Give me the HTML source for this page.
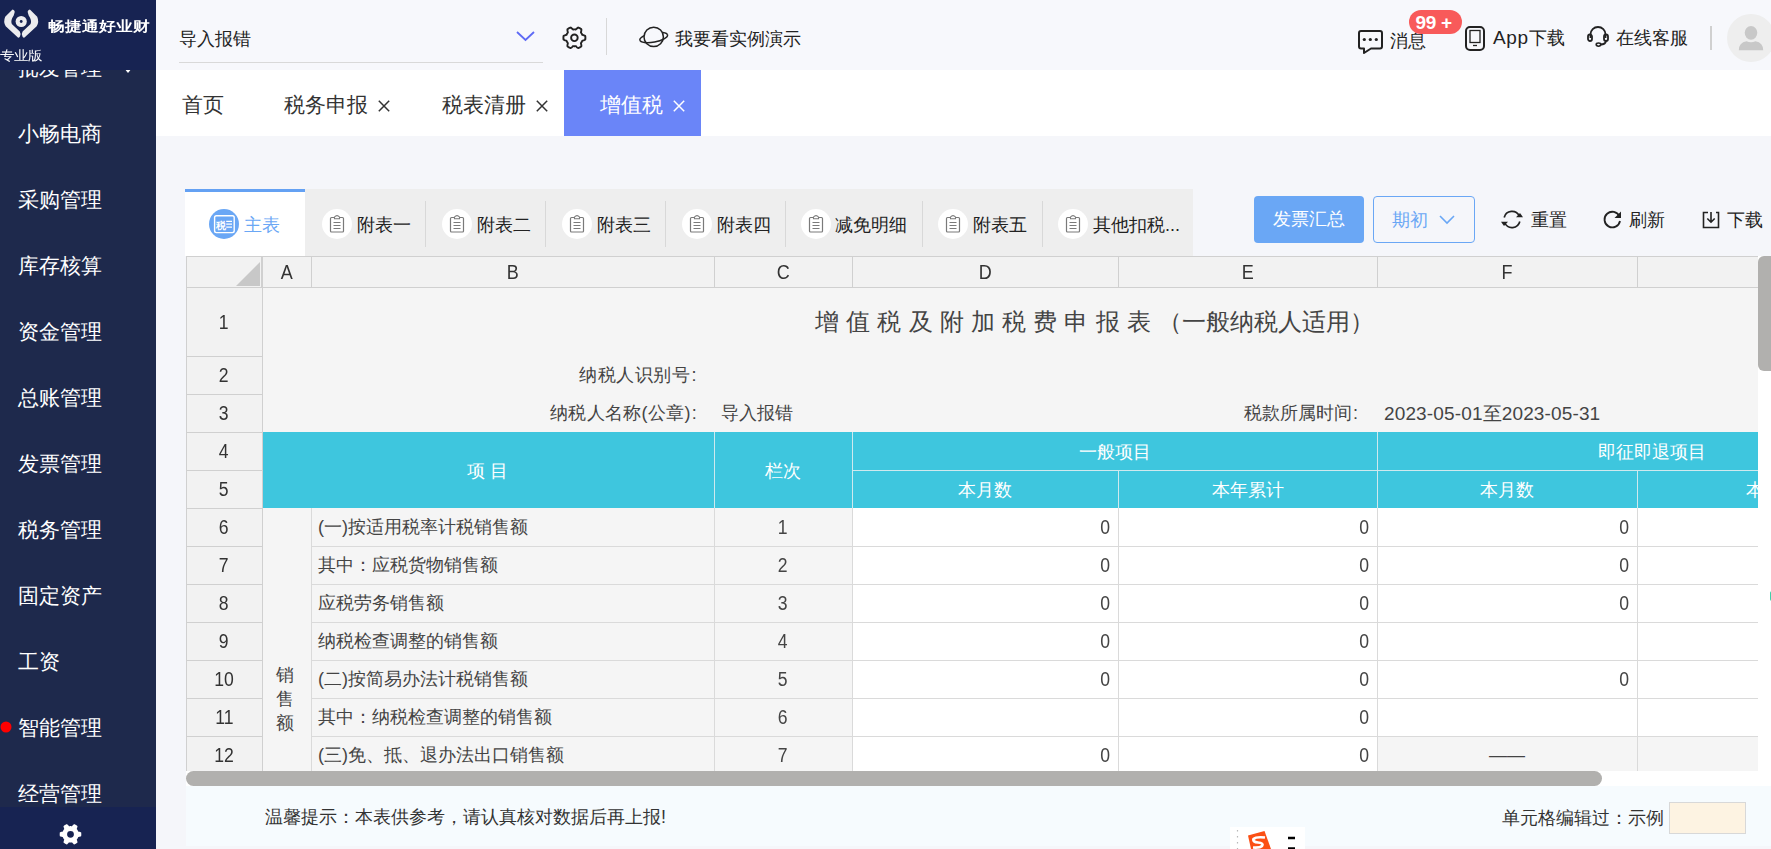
<!DOCTYPE html>
<html><head><meta charset="utf-8"><style>
*{box-sizing:border-box;margin:0;padding:0}
html,body{width:1771px;height:849px;overflow:hidden;background:#f5f6fa;font-family:"Liberation Sans",sans-serif}
body{position:relative}
.a{position:absolute;white-space:nowrap}
svg{position:absolute;overflow:visible}
</style></head><body>
<div class="a" style="left:0px;top:0px;width:156px;height:849px;background:#1e294c"></div>
<div class="a" style="left:18px;top:57px;font-size:21px;line-height:21px;color:#fff;">批发管理</div>
<svg style="left:124px;top:68px" width="8" height="6"><path d="M0 0L8 0L4 5Z" fill="#fff"/></svg>
<div class="a" style="left:0px;top:0px;width:156px;height:70px;background:#172352"></div>
<svg style="left:0;top:5px" width="45" height="45" viewBox="0 5 45 45">
<path d="M12.5 9.5Q15.2 10.5 14.6 12.5L13.7 15.4Q10.2 20.6 11.8 23.9L19.8 31.4Q21 34 20.3 35.2Q19.8 38.3 17.9 37.5L5.7 26.2Q3 22 5.2 16.8L12.5 9.5Z" fill="#ececee"/>
<path d="M29.9 9.5 Q27.2 10.5 27.8 12.5 L28.7 15.4 Q32.2 20.6 30.6 23.9 L22.6 31.4 Q21.4 34.0 22.1 35.2 Q22.6 38.3 24.5 37.5 L36.7 26.2 Q39.4 22.0 37.2 16.8 L29.9 9.5 Z" fill="#ececee"/>
<circle cx="21.2" cy="21.5" r="5.6" fill="#ececee"/><circle cx="21.2" cy="21.5" r="1.4" fill="#172352"/>
</svg>
<div class="a" style="left:48px;top:19px;font-size:15px;line-height:15px;color:#fff;font-weight:bold;transform:scale(1.13,0.95);transform-origin:0 0">畅捷通好业财</div>
<div class="a" style="left:0px;top:49px;font-size:14px;line-height:14px;color:#fff;transform:scaleY(0.9);transform-origin:0 0">专业版</div>
<div class="a" style="left:18px;top:123px;font-size:21px;line-height:21px;color:#fff;">小畅电商</div>
<div class="a" style="left:18px;top:189px;font-size:21px;line-height:21px;color:#fff;">采购管理</div>
<div class="a" style="left:18px;top:255px;font-size:21px;line-height:21px;color:#fff;">库存核算</div>
<div class="a" style="left:18px;top:321px;font-size:21px;line-height:21px;color:#fff;">资金管理</div>
<div class="a" style="left:18px;top:387px;font-size:21px;line-height:21px;color:#fff;">总账管理</div>
<div class="a" style="left:18px;top:453px;font-size:21px;line-height:21px;color:#fff;">发票管理</div>
<div class="a" style="left:18px;top:519px;font-size:21px;line-height:21px;color:#fff;">税务管理</div>
<div class="a" style="left:18px;top:585px;font-size:21px;line-height:21px;color:#fff;">固定资产</div>
<div class="a" style="left:18px;top:651px;font-size:21px;line-height:21px;color:#fff;">工资</div>
<div class="a" style="left:18px;top:717px;font-size:21px;line-height:21px;color:#fff;">智能管理</div>
<div class="a" style="left:18px;top:783px;font-size:21px;line-height:21px;color:#fff;">经营管理</div>
<svg style="left:0;top:721px" width="12" height="12"><circle cx="6" cy="6" r="5.5" fill="#f00"/></svg>
<div class="a" style="left:0px;top:807px;width:156px;height:42px;background:#172352"></div>
<svg style="left:50px;top:814px" width="40" height="40" viewBox="0 0 40 40">
<path fill="#fff" fill-rule="evenodd" d="M31.30 20.30L31.30 20.58L31.29 20.87L31.27 21.15L31.24 21.43L31.21 21.71L31.17 21.99L31.12 22.27L30.66 22.46L30.17 22.62L29.68 22.76L29.18 22.87L28.69 22.96L28.23 23.04L28.16 23.24L28.08 23.44L27.99 23.64L27.90 23.83L27.81 24.02L27.71 24.21L27.60 24.40L27.49 24.58L27.38 24.77L27.26 24.94L27.13 25.12L27.01 25.29L26.87 25.46L26.74 25.63L26.90 26.07L27.07 26.53L27.22 27.02L27.35 27.52L27.45 28.02L27.51 28.51L27.30 28.69L27.07 28.87L26.85 29.04L26.62 29.20L26.38 29.36L26.14 29.51L25.90 29.65L25.65 29.79L25.40 29.92L25.15 30.05L24.89 30.17L24.63 30.28L24.37 30.38L24.10 30.48L23.71 30.18L23.33 29.84L22.96 29.48L22.61 29.10L22.29 28.73L21.99 28.36L21.78 28.40L21.57 28.43L21.36 28.46L21.14 28.47L20.93 28.49L20.71 28.50L20.50 28.50L20.29 28.50L20.07 28.49L19.86 28.47L19.64 28.46L19.43 28.43L19.22 28.40L19.01 28.36L18.71 28.73L18.39 29.10L18.04 29.48L17.67 29.84L17.29 30.18L16.90 30.48L16.63 30.38L16.37 30.28L16.11 30.17L15.85 30.05L15.60 29.92L15.35 29.79L15.10 29.65L14.86 29.51L14.62 29.36L14.38 29.20L14.15 29.04L13.93 28.87L13.70 28.69L13.49 28.51L13.55 28.02L13.65 27.52L13.78 27.02L13.93 26.53L14.10 26.07L14.26 25.63L14.13 25.46L13.99 25.29L13.87 25.12L13.74 24.94L13.62 24.77L13.51 24.58L13.40 24.40L13.29 24.21L13.19 24.02L13.10 23.83L13.01 23.64L12.92 23.44L12.84 23.24L12.77 23.04L12.31 22.96L11.82 22.87L11.32 22.76L10.83 22.62L10.34 22.46L9.88 22.27L9.83 21.99L9.79 21.71L9.76 21.43L9.73 21.15L9.71 20.87L9.70 20.58L9.70 20.30L9.70 20.02L9.71 19.73L9.73 19.45L9.76 19.17L9.79 18.89L9.83 18.61L9.88 18.33L10.34 18.14L10.83 17.98L11.32 17.84L11.82 17.73L12.31 17.64L12.77 17.56L12.84 17.36L12.92 17.16L13.01 16.96L13.10 16.77L13.19 16.58L13.29 16.39L13.40 16.20L13.51 16.02L13.62 15.83L13.74 15.66L13.87 15.48L13.99 15.31L14.13 15.14L14.26 14.97L14.10 14.53L13.93 14.07L13.78 13.58L13.65 13.08L13.55 12.58L13.49 12.09L13.70 11.91L13.93 11.73L14.15 11.56L14.38 11.40L14.62 11.24L14.86 11.09L15.10 10.95L15.35 10.81L15.60 10.68L15.85 10.55L16.11 10.43L16.37 10.32L16.63 10.22L16.90 10.12L17.29 10.42L17.67 10.76L18.04 11.12L18.39 11.50L18.71 11.87L19.01 12.24L19.22 12.20L19.43 12.17L19.64 12.14L19.86 12.13L20.07 12.11L20.29 12.10L20.50 12.10L20.71 12.10L20.93 12.11L21.14 12.13L21.36 12.14L21.57 12.17L21.78 12.20L21.99 12.24L22.29 11.87L22.61 11.50L22.96 11.12L23.33 10.76L23.71 10.42L24.10 10.12L24.37 10.22L24.63 10.32L24.89 10.43L25.15 10.55L25.40 10.68L25.65 10.81L25.90 10.95L26.14 11.09L26.38 11.24L26.62 11.40L26.85 11.56L27.07 11.73L27.30 11.91L27.51 12.09L27.45 12.58L27.35 13.08L27.22 13.58L27.07 14.07L26.90 14.53L26.74 14.97L26.87 15.14L27.01 15.31L27.13 15.48L27.26 15.66L27.38 15.83L27.49 16.02L27.60 16.20L27.71 16.39L27.81 16.58L27.90 16.77L27.99 16.96L28.08 17.16L28.16 17.36L28.23 17.56L28.69 17.64L29.18 17.73L29.68 17.84L30.17 17.98L30.66 18.14L31.12 18.33L31.17 18.61L31.21 18.89L31.24 19.17L31.27 19.45L31.29 19.73L31.30 20.02Z M20.5 16.9A3.4 3.4 0 1 0 20.5 23.7A3.4 3.4 0 1 0 20.5 16.9Z"/>
</svg>
<div class="a" style="left:156px;top:0px;width:1615px;height:70px;background:#f7f8fc"></div>
<div class="a" style="left:179px;top:30px;font-size:18px;line-height:18px;color:#222;">导入报错</div>
<div class="a" style="left:179px;top:62px;width:364px;height:1px;background:#d9d9d9"></div>
<svg style="left:516px;top:31px" width="19" height="10"><path d="M1 1L9.5 9L18 1" stroke="#5e6af5" stroke-width="1.8" fill="none"/></svg>
<svg style="left:554px;top:18px" width="40" height="40" viewBox="0 0 40 40">
<path fill="none" stroke="#222" stroke-width="1.9" stroke-linejoin="round" d="M31.40 19.80L31.40 20.09L31.38 20.38L31.37 20.66L31.34 20.95L31.31 21.24L31.26 21.52L30.98 21.76L30.60 21.97L30.19 22.15L29.77 22.31L29.35 22.45L28.94 22.57L28.54 22.68L28.24 22.81L28.16 23.01L28.07 23.22L27.98 23.42L27.88 23.61L27.78 23.81L27.67 24.00L27.56 24.19L27.44 24.37L27.32 24.56L27.20 24.74L27.06 24.91L26.93 25.09L26.97 25.41L27.07 25.81L27.17 26.23L27.26 26.66L27.33 27.10L27.37 27.55L27.39 27.98L27.32 28.35L27.10 28.53L26.87 28.70L26.63 28.87L26.39 29.03L26.15 29.18L25.90 29.33L25.65 29.47L25.39 29.60L25.14 29.73L24.87 29.85L24.61 29.96L24.34 30.07L23.99 29.95L23.62 29.71L23.26 29.45L22.91 29.17L22.58 28.88L22.27 28.58L21.97 28.29L21.71 28.10L21.50 28.13L21.28 28.15L21.06 28.17L20.84 28.19L20.62 28.20L20.40 28.20L20.18 28.20L19.96 28.19L19.74 28.17L19.52 28.15L19.30 28.13L19.09 28.10L18.83 28.29L18.53 28.58L18.22 28.88L17.89 29.17L17.54 29.45L17.18 29.71L16.81 29.95L16.46 30.07L16.19 29.96L15.93 29.85L15.66 29.73L15.41 29.60L15.15 29.47L14.90 29.33L14.65 29.18L14.41 29.03L14.17 28.87L13.93 28.70L13.70 28.53L13.48 28.35L13.41 27.98L13.43 27.55L13.47 27.10L13.54 26.66L13.63 26.23L13.73 25.81L13.83 25.41L13.87 25.09L13.74 24.91L13.60 24.74L13.48 24.56L13.36 24.37L13.24 24.19L13.13 24.00L13.02 23.81L12.92 23.61L12.82 23.42L12.73 23.22L12.64 23.01L12.56 22.81L12.26 22.68L11.86 22.57L11.45 22.45L11.03 22.31L10.61 22.15L10.20 21.97L9.82 21.76L9.54 21.52L9.49 21.24L9.46 20.95L9.43 20.66L9.42 20.38L9.40 20.09L9.40 19.80L9.40 19.51L9.42 19.22L9.43 18.94L9.46 18.65L9.49 18.36L9.54 18.08L9.82 17.84L10.20 17.63L10.61 17.45L11.03 17.29L11.45 17.15L11.86 17.03L12.26 16.92L12.56 16.79L12.64 16.59L12.73 16.38L12.82 16.18L12.92 15.99L13.02 15.79L13.13 15.60L13.24 15.41L13.36 15.23L13.48 15.04L13.60 14.86L13.74 14.69L13.87 14.51L13.83 14.19L13.73 13.79L13.63 13.37L13.54 12.94L13.47 12.50L13.43 12.05L13.41 11.62L13.48 11.25L13.70 11.07L13.93 10.90L14.17 10.73L14.41 10.57L14.65 10.42L14.90 10.27L15.15 10.13L15.41 10.00L15.66 9.87L15.93 9.75L16.19 9.64L16.46 9.53L16.81 9.65L17.18 9.89L17.54 10.15L17.89 10.43L18.22 10.72L18.53 11.02L18.83 11.31L19.09 11.50L19.30 11.47L19.52 11.45L19.74 11.43L19.96 11.41L20.18 11.40L20.40 11.40L20.62 11.40L20.84 11.41L21.06 11.43L21.28 11.45L21.50 11.47L21.71 11.50L21.97 11.31L22.27 11.02L22.58 10.72L22.91 10.43L23.26 10.15L23.62 9.89L23.99 9.65L24.34 9.53L24.61 9.64L24.87 9.75L25.14 9.87L25.39 10.00L25.65 10.13L25.90 10.27L26.15 10.42L26.39 10.57L26.63 10.73L26.87 10.90L27.10 11.07L27.32 11.25L27.39 11.62L27.37 12.05L27.33 12.50L27.26 12.94L27.17 13.37L27.07 13.79L26.97 14.19L26.93 14.51L27.06 14.69L27.20 14.86L27.32 15.04L27.44 15.23L27.56 15.41L27.67 15.60L27.78 15.79L27.88 15.99L27.98 16.18L28.07 16.38L28.16 16.59L28.24 16.79L28.54 16.92L28.94 17.03L29.35 17.15L29.77 17.29L30.19 17.45L30.60 17.63L30.98 17.84L31.26 18.08L31.31 18.36L31.34 18.65L31.37 18.94L31.38 19.22L31.40 19.51Z"/>
<circle cx="20.4" cy="19.8" r="3.3" fill="none" stroke="#222" stroke-width="1.9"/></svg>
<div class="a" style="left:606px;top:18px;width:1px;height:37px;background:#d8d8d8"></div>
<svg style="left:630px;top:17px" width="40" height="40" viewBox="0 0 40 40">
<defs><mask id="pm"><rect x="0" y="0" width="40" height="40" fill="#fff"/><circle cx="23.7" cy="19.9" r="9.7" fill="#000"/></mask></defs>
<circle cx="23.7" cy="19.9" r="9.7" fill="none" stroke="#222" stroke-width="1.5"/>
<g transform="rotate(-11 23.7 20.5)">
<path d="M9.6 20.5A14.1 4.6 0 0 1 37.8 20.5" fill="none" stroke="#222" stroke-width="1.5" mask="url(#pm)"/>
<path d="M9.6 20.5A14.1 4.6 0 0 0 37.8 20.5" fill="none" stroke="#222" stroke-width="1.5"/>
</g></svg>
<div class="a" style="left:675px;top:30px;font-size:18px;line-height:18px;color:#222;">我要看实例演示</div>
<svg style="left:1357px;top:29px" width="26" height="26" viewBox="0 0 26 26">
<path d="M4 2H23Q25 2 25 4V17.5Q25 19.5 23 19.5H14L7 24V19.5H4Q2 19.5 2 17.5V4Q2 2 4 2Z" fill="none" stroke="#222" stroke-width="2" stroke-linejoin="round"/>
<circle cx="7.3" cy="10.5" r="1.6" fill="#222"/><circle cx="13.3" cy="10.5" r="1.6" fill="#222"/><circle cx="19.3" cy="10.5" r="1.6" fill="#222"/></svg>
<div class="a" style="left:1390px;top:32px;font-size:18px;line-height:18px;color:#222;">消息</div>
<div class="a" style="left:1409px;top:10px;width:53px;height:24px;border-radius:12px;background:#f85a5a;color:#fff;font-weight:bold;font-size:19px;line-height:25px;text-align:left;padding-left:6.5px;letter-spacing:-0.3px">99 +</div>
<svg style="left:1465px;top:26px" width="20" height="25" viewBox="0 0 20 25">
<rect x="1" y="1" width="18" height="23" rx="4" fill="none" stroke="#222" stroke-width="2"/>
<rect x="5" y="4.5" width="10" height="12" fill="none" stroke="#222" stroke-width="1.3"/>
<path d="M8 19.5H12" stroke="#222" stroke-width="1.3"/></svg>
<div class="a" style="left:1493px;top:29px;font-size:18px;line-height:18px;color:#222;"><span style="letter-spacing:0.6px;font-size:19px">App</span>下载</div>
<svg style="left:1587px;top:25px" width="22" height="23" viewBox="0 0 22 23">
<path d="M3.5 13V9.5A7.5 7.5 0 0 1 18.5 9.5V13" fill="none" stroke="#222" stroke-width="1.8"/>
<rect x="1" y="9.5" width="4" height="6.5" rx="2" fill="none" stroke="#222" stroke-width="1.8"/>
<rect x="17" y="9.5" width="4" height="6.5" rx="2" fill="none" stroke="#222" stroke-width="1.8"/>
<path d="M19 16Q18.5 19.5 13.5 19.5" fill="none" stroke="#222" stroke-width="1.8"/>
<ellipse cx="11.5" cy="19.6" rx="2.3" ry="1.6" fill="none" stroke="#222" stroke-width="1.6"/></svg>
<div class="a" style="left:1616px;top:29px;font-size:18px;line-height:18px;color:#222;">在线客服</div>
<div class="a" style="left:1710px;top:26px;width:2px;height:24px;background:#d0d0d0"></div>
<svg style="left:1727px;top:14px" width="48" height="48" viewBox="0 0 48 48">
<circle cx="24" cy="24" r="24" fill="#eeeeee"/>
<ellipse cx="24" cy="18.8" rx="6.3" ry="6.9" fill="#c8c8c8"/>
<path d="M11.8 36.3Q11.8 28.5 19.5 27.2Q24 29.5 28.5 27.2Q36.2 28.5 36.2 36.3Z" fill="#c8c8c8"/></svg>
<div class="a" style="left:156px;top:70px;width:1615px;height:66px;background:#fff"></div>
<div class="a" style="left:182px;top:94px;font-size:21px;line-height:21px;color:#333;">首页</div>
<div class="a" style="left:284px;top:94px;font-size:21px;line-height:21px;color:#333;">税务申报</div>
<svg style="left:378px;top:100px" width="12" height="12"><path d="M0.8 0.8L11.2 11.2M11.2 0.8L0.8 11.2" stroke="#333" stroke-width="1.5"/></svg>
<div class="a" style="left:442px;top:94px;font-size:21px;line-height:21px;color:#333;">税表清册</div>
<svg style="left:536px;top:100px" width="12" height="12"><path d="M0.8 0.8L11.2 11.2M11.2 0.8L0.8 11.2" stroke="#333" stroke-width="1.5"/></svg>
<div class="a" style="left:564px;top:70px;width:137px;height:66px;background:#6a85f8"></div>
<div class="a" style="left:600px;top:94px;font-size:21px;line-height:21px;color:#fff;">增值税</div>
<svg style="left:673px;top:100px" width="12" height="12"><path d="M0.8 0.8L11.2 11.2M11.2 0.8L0.8 11.2" stroke="#fff" stroke-width="1.5"/></svg>
<div class="a" style="left:185px;top:189px;width:1008px;height:67px;background:#eeeeee"></div>
<div class="a" style="left:185px;top:189px;width:120px;height:67px;background:#fff"></div>
<div class="a" style="left:185px;top:189px;width:120px;height:3px;background:#64a1f3"></div>
<svg style="left:209px;top:209px" width="30" height="30" viewBox="0 0 30 30">
<circle cx="15" cy="15" r="15" fill="#6aa7f5"/>
<rect x="5.6" y="6.8" width="19.6" height="16.8" rx="1.8" fill="none" stroke="#fff" stroke-width="1.4"/>
<text x="6.6" y="19.6" font-size="10" font-weight="bold" fill="#fff" font-family="Liberation Sans">税</text>
<path d="M17.2 12.3H23M17.2 15.2H23M17.2 18.1H23" stroke="#fff" stroke-width="1.3"/></svg>
<div class="a" style="left:244px;top:216px;font-size:18px;line-height:18px;color:#6aa7f5;">主表</div>
<div class="a" style="left:425px;top:201px;width:1px;height:46px;background:#d8d8d8"></div>
<div class="a" style="left:545px;top:201px;width:1px;height:46px;background:#d8d8d8"></div>
<div class="a" style="left:665px;top:201px;width:1px;height:46px;background:#d8d8d8"></div>
<div class="a" style="left:785px;top:201px;width:1px;height:46px;background:#d8d8d8"></div>
<div class="a" style="left:922px;top:201px;width:1px;height:46px;background:#d8d8d8"></div>
<div class="a" style="left:1042px;top:201px;width:1px;height:46px;background:#d8d8d8"></div>
<svg style="left:322px;top:209px" width="30" height="30" viewBox="0 0 30 30">
<circle cx="15" cy="15" r="15" fill="#fff"/>
<path d="M12.5 8.5H9.5Q8.5 8.5 8.5 9.5V22Q8.5 23 9.5 23H20.5Q21.5 23 21.5 22V9.5Q21.5 8.5 20.5 8.5H17.5" fill="none" stroke="#7a7a7a" stroke-width="1.2"/>
<path d="M12.5 9.8V8Q15 5.2 17.5 8V9.8Z" fill="none" stroke="#7a7a7a" stroke-width="1.1"/>
<path d="M11.5 13.5H18.5M11.5 16.5H18.5M11.5 19.5H18.5" stroke="#7a7a7a" stroke-width="1.2"/></svg>
<div class="a" style="left:357px;top:216px;font-size:18px;line-height:18px;color:#222;">附表一</div>
<svg style="left:442px;top:209px" width="30" height="30" viewBox="0 0 30 30">
<circle cx="15" cy="15" r="15" fill="#fff"/>
<path d="M12.5 8.5H9.5Q8.5 8.5 8.5 9.5V22Q8.5 23 9.5 23H20.5Q21.5 23 21.5 22V9.5Q21.5 8.5 20.5 8.5H17.5" fill="none" stroke="#7a7a7a" stroke-width="1.2"/>
<path d="M12.5 9.8V8Q15 5.2 17.5 8V9.8Z" fill="none" stroke="#7a7a7a" stroke-width="1.1"/>
<path d="M11.5 13.5H18.5M11.5 16.5H18.5M11.5 19.5H18.5" stroke="#7a7a7a" stroke-width="1.2"/></svg>
<div class="a" style="left:477px;top:216px;font-size:18px;line-height:18px;color:#222;">附表二</div>
<svg style="left:562px;top:209px" width="30" height="30" viewBox="0 0 30 30">
<circle cx="15" cy="15" r="15" fill="#fff"/>
<path d="M12.5 8.5H9.5Q8.5 8.5 8.5 9.5V22Q8.5 23 9.5 23H20.5Q21.5 23 21.5 22V9.5Q21.5 8.5 20.5 8.5H17.5" fill="none" stroke="#7a7a7a" stroke-width="1.2"/>
<path d="M12.5 9.8V8Q15 5.2 17.5 8V9.8Z" fill="none" stroke="#7a7a7a" stroke-width="1.1"/>
<path d="M11.5 13.5H18.5M11.5 16.5H18.5M11.5 19.5H18.5" stroke="#7a7a7a" stroke-width="1.2"/></svg>
<div class="a" style="left:597px;top:216px;font-size:18px;line-height:18px;color:#222;">附表三</div>
<svg style="left:682px;top:209px" width="30" height="30" viewBox="0 0 30 30">
<circle cx="15" cy="15" r="15" fill="#fff"/>
<path d="M12.5 8.5H9.5Q8.5 8.5 8.5 9.5V22Q8.5 23 9.5 23H20.5Q21.5 23 21.5 22V9.5Q21.5 8.5 20.5 8.5H17.5" fill="none" stroke="#7a7a7a" stroke-width="1.2"/>
<path d="M12.5 9.8V8Q15 5.2 17.5 8V9.8Z" fill="none" stroke="#7a7a7a" stroke-width="1.1"/>
<path d="M11.5 13.5H18.5M11.5 16.5H18.5M11.5 19.5H18.5" stroke="#7a7a7a" stroke-width="1.2"/></svg>
<div class="a" style="left:717px;top:216px;font-size:18px;line-height:18px;color:#222;">附表四</div>
<svg style="left:800.5px;top:209px" width="30" height="30" viewBox="0 0 30 30">
<circle cx="15" cy="15" r="15" fill="#fff"/>
<path d="M12.5 8.5H9.5Q8.5 8.5 8.5 9.5V22Q8.5 23 9.5 23H20.5Q21.5 23 21.5 22V9.5Q21.5 8.5 20.5 8.5H17.5" fill="none" stroke="#7a7a7a" stroke-width="1.2"/>
<path d="M12.5 9.8V8Q15 5.2 17.5 8V9.8Z" fill="none" stroke="#7a7a7a" stroke-width="1.1"/>
<path d="M11.5 13.5H18.5M11.5 16.5H18.5M11.5 19.5H18.5" stroke="#7a7a7a" stroke-width="1.2"/></svg>
<div class="a" style="left:835px;top:216px;font-size:18px;line-height:18px;color:#222;">减免明细</div>
<svg style="left:937.5px;top:209px" width="30" height="30" viewBox="0 0 30 30">
<circle cx="15" cy="15" r="15" fill="#fff"/>
<path d="M12.5 8.5H9.5Q8.5 8.5 8.5 9.5V22Q8.5 23 9.5 23H20.5Q21.5 23 21.5 22V9.5Q21.5 8.5 20.5 8.5H17.5" fill="none" stroke="#7a7a7a" stroke-width="1.2"/>
<path d="M12.5 9.8V8Q15 5.2 17.5 8V9.8Z" fill="none" stroke="#7a7a7a" stroke-width="1.1"/>
<path d="M11.5 13.5H18.5M11.5 16.5H18.5M11.5 19.5H18.5" stroke="#7a7a7a" stroke-width="1.2"/></svg>
<div class="a" style="left:973px;top:216px;font-size:18px;line-height:18px;color:#222;">附表五</div>
<svg style="left:1057.5px;top:209px" width="30" height="30" viewBox="0 0 30 30">
<circle cx="15" cy="15" r="15" fill="#fff"/>
<path d="M12.5 8.5H9.5Q8.5 8.5 8.5 9.5V22Q8.5 23 9.5 23H20.5Q21.5 23 21.5 22V9.5Q21.5 8.5 20.5 8.5H17.5" fill="none" stroke="#7a7a7a" stroke-width="1.2"/>
<path d="M12.5 9.8V8Q15 5.2 17.5 8V9.8Z" fill="none" stroke="#7a7a7a" stroke-width="1.1"/>
<path d="M11.5 13.5H18.5M11.5 16.5H18.5M11.5 19.5H18.5" stroke="#7a7a7a" stroke-width="1.2"/></svg>
<div class="a" style="left:1093px;top:216px;font-size:18px;line-height:18px;color:#222;">其他扣税...</div>
<div class="a" style="left:1254px;top:196px;width:110px;height:47px;border-radius:4px;background:#6aa7f5;color:#fff;font-size:18px;line-height:47px;text-align:center">发票汇总</div>
<div class="a" style="left:1373px;top:196px;width:102px;height:47px;border-radius:4px;border:1px solid #6aa7f5;"></div>
<div class="a" style="left:1392px;top:211px;font-size:18px;line-height:18px;color:#6aa7f5;">期初</div>
<svg style="left:1439px;top:215px" width="16" height="9"><path d="M1 1L8 8L15 1" stroke="#6aa7f5" stroke-width="1.6" fill="none"/></svg>
<svg style="left:1500px;top:209px" width="24" height="21" viewBox="0 0 24 21">
<path d="M4.2 8.5A8 8 0 0 1 19.2 7" fill="none" stroke="#222" stroke-width="1.7"/>
<path d="M19.8 12.5A8 8 0 0 1 4.8 14" fill="none" stroke="#222" stroke-width="1.7"/>
<path d="M16 8.2L23 8.2L20 4Z" fill="#222"/><path d="M8 12.8L1 12.8L4 17Z" fill="#222"/></svg>
<div class="a" style="left:1531px;top:211px;font-size:18px;line-height:18px;color:#222;">重置</div>
<svg style="left:1603px;top:210px" width="19" height="19" viewBox="0 0 19 19">
<path d="M16.5 6.5A7.8 7.8 0 1 0 17 11" fill="none" stroke="#222" stroke-width="1.8"/>
<path d="M18 1.5V8H11.5Z" fill="#222"/></svg>
<div class="a" style="left:1629px;top:211px;font-size:18px;line-height:18px;color:#222;">刷新</div>
<svg style="left:1702px;top:211px" width="18" height="18" viewBox="0 0 18 18">
<path d="M6 1.5H1.5V16.5H16.5V1.5H14" fill="none" stroke="#222" stroke-width="1.6"/>
<path d="M9 1V11M5.3 7.5L9 11.2L12.7 7.5" fill="none" stroke="#222" stroke-width="1.6"/></svg>
<div class="a" style="left:1727px;top:211px;font-size:18px;line-height:18px;color:#222;">下载</div>
<div class="a" style="left:186px;top:256px;width:1585px;height:530px;background:#fff"></div>
<div class="a" style="left:186px;top:256px;width:1572px;height:515px;background:#f5f5f5"></div>
<div class="a" style="left:186px;top:256px;width:1572px;height:32px;background:#f2f2f2"></div>
<div class="a" style="left:186px;top:256px;width:76px;height:515px;background:#f2f2f2"></div>
<svg style="left:236px;top:262px" width="24" height="24"><path d="M24 0V24H0Z" fill="#c8c8c8"/></svg>
<div class="a" style="left:262px;top:256px;width:49px;height:32px;line-height:32px;text-align:center;font-size:20px;color:#333"><span style="display:inline-block;transform:scaleX(0.9)">A</span></div>
<div class="a" style="left:311px;top:256px;width:403px;height:32px;line-height:32px;text-align:center;font-size:20px;color:#333"><span style="display:inline-block;transform:scaleX(0.9)">B</span></div>
<div class="a" style="left:714px;top:256px;width:138px;height:32px;line-height:32px;text-align:center;font-size:20px;color:#333"><span style="display:inline-block;transform:scaleX(0.9)">C</span></div>
<div class="a" style="left:852px;top:256px;width:266px;height:32px;line-height:32px;text-align:center;font-size:20px;color:#333"><span style="display:inline-block;transform:scaleX(0.9)">D</span></div>
<div class="a" style="left:1118px;top:256px;width:259px;height:32px;line-height:32px;text-align:center;font-size:20px;color:#333"><span style="display:inline-block;transform:scaleX(0.9)">E</span></div>
<div class="a" style="left:1377px;top:256px;width:260px;height:32px;line-height:32px;text-align:center;font-size:20px;color:#333"><span style="display:inline-block;transform:scaleX(0.9)">F</span></div>
<div class="a" style="left:852px;top:508px;width:906px;height:263px;background:#fff"></div>
<div class="a" style="left:1377px;top:736px;width:381px;height:35px;background:#f5f5f5"></div>
<div class="a" style="left:263px;top:432px;width:1495px;height:76px;background:#3ec6de"></div>
<div class="a" style="left:186px;top:256px;width:1572px;height:1px;background:#d0d0d0"></div>
<div class="a" style="left:186px;top:287px;width:1572px;height:1px;background:#d0d0d0"></div>
<div class="a" style="left:186px;top:256px;width:1px;height:515px;background:#d0d0d0"></div>
<div class="a" style="left:262px;top:256px;width:1px;height:515px;background:#d0d0d0"></div>
<div class="a" style="left:261px;top:256px;width:1px;height:32px;background:#d0d0d0"></div>
<div class="a" style="left:311px;top:256px;width:1px;height:32px;background:#d0d0d0"></div>
<div class="a" style="left:714px;top:256px;width:1px;height:32px;background:#d0d0d0"></div>
<div class="a" style="left:852px;top:256px;width:1px;height:32px;background:#d0d0d0"></div>
<div class="a" style="left:1118px;top:256px;width:1px;height:32px;background:#d0d0d0"></div>
<div class="a" style="left:1377px;top:256px;width:1px;height:32px;background:#d0d0d0"></div>
<div class="a" style="left:1637px;top:256px;width:1px;height:32px;background:#d0d0d0"></div>
<div class="a" style="left:186px;top:356px;width:76px;height:1px;background:#d0d0d0"></div>
<div class="a" style="left:186px;top:394px;width:76px;height:1px;background:#d0d0d0"></div>
<div class="a" style="left:186px;top:432px;width:76px;height:1px;background:#d0d0d0"></div>
<div class="a" style="left:186px;top:470px;width:76px;height:1px;background:#d0d0d0"></div>
<div class="a" style="left:186px;top:508px;width:76px;height:1px;background:#d0d0d0"></div>
<div class="a" style="left:186px;top:546px;width:76px;height:1px;background:#d0d0d0"></div>
<div class="a" style="left:186px;top:584px;width:76px;height:1px;background:#d0d0d0"></div>
<div class="a" style="left:186px;top:622px;width:76px;height:1px;background:#d0d0d0"></div>
<div class="a" style="left:186px;top:660px;width:76px;height:1px;background:#d0d0d0"></div>
<div class="a" style="left:186px;top:698px;width:76px;height:1px;background:#d0d0d0"></div>
<div class="a" style="left:186px;top:736px;width:76px;height:1px;background:#d0d0d0"></div>
<div class="a" style="left:186px;top:774px;width:76px;height:1px;background:#d0d0d0"></div>
<div class="a" style="left:186px;top:288px;width:76px;height:68px;line-height:68px;text-align:center;font-size:20px;color:#333"><span style="display:inline-block;transform:scaleX(0.88)">1</span></div>
<div class="a" style="left:186px;top:356px;width:76px;height:38px;line-height:38px;text-align:center;font-size:20px;color:#333"><span style="display:inline-block;transform:scaleX(0.88)">2</span></div>
<div class="a" style="left:186px;top:394px;width:76px;height:38px;line-height:38px;text-align:center;font-size:20px;color:#333"><span style="display:inline-block;transform:scaleX(0.88)">3</span></div>
<div class="a" style="left:186px;top:432px;width:76px;height:38px;line-height:38px;text-align:center;font-size:20px;color:#333"><span style="display:inline-block;transform:scaleX(0.88)">4</span></div>
<div class="a" style="left:186px;top:470px;width:76px;height:38px;line-height:38px;text-align:center;font-size:20px;color:#333"><span style="display:inline-block;transform:scaleX(0.88)">5</span></div>
<div class="a" style="left:186px;top:508px;width:76px;height:38px;line-height:38px;text-align:center;font-size:20px;color:#333"><span style="display:inline-block;transform:scaleX(0.88)">6</span></div>
<div class="a" style="left:186px;top:546px;width:76px;height:38px;line-height:38px;text-align:center;font-size:20px;color:#333"><span style="display:inline-block;transform:scaleX(0.88)">7</span></div>
<div class="a" style="left:186px;top:584px;width:76px;height:38px;line-height:38px;text-align:center;font-size:20px;color:#333"><span style="display:inline-block;transform:scaleX(0.88)">8</span></div>
<div class="a" style="left:186px;top:622px;width:76px;height:38px;line-height:38px;text-align:center;font-size:20px;color:#333"><span style="display:inline-block;transform:scaleX(0.88)">9</span></div>
<div class="a" style="left:186px;top:660px;width:76px;height:38px;line-height:38px;text-align:center;font-size:20px;color:#333"><span style="display:inline-block;transform:scaleX(0.88)">10</span></div>
<div class="a" style="left:186px;top:698px;width:76px;height:38px;line-height:38px;text-align:center;font-size:20px;color:#333"><span style="display:inline-block;transform:scaleX(0.88)">11</span></div>
<div class="a" style="left:186px;top:736px;width:76px;height:38px;line-height:38px;text-align:center;font-size:20px;color:#333"><span style="display:inline-block;transform:scaleX(0.88)">12</span></div>
<div class="a" style="left:311px;top:546px;width:1447px;height:1px;background:#dadada"></div>
<div class="a" style="left:311px;top:584px;width:1447px;height:1px;background:#dadada"></div>
<div class="a" style="left:311px;top:622px;width:1447px;height:1px;background:#dadada"></div>
<div class="a" style="left:311px;top:660px;width:1447px;height:1px;background:#dadada"></div>
<div class="a" style="left:311px;top:698px;width:1447px;height:1px;background:#dadada"></div>
<div class="a" style="left:311px;top:736px;width:1447px;height:1px;background:#dadada"></div>
<div class="a" style="left:311px;top:508px;width:1px;height:263px;background:#dadada"></div>
<div class="a" style="left:714px;top:508px;width:1px;height:263px;background:#dadada"></div>
<div class="a" style="left:852px;top:508px;width:1px;height:263px;background:#dadada"></div>
<div class="a" style="left:1118px;top:508px;width:1px;height:263px;background:#dadada"></div>
<div class="a" style="left:1377px;top:508px;width:1px;height:263px;background:#dadada"></div>
<div class="a" style="left:1637px;top:508px;width:1px;height:263px;background:#dadada"></div>
<div class="a" style="left:714px;top:432px;width:1px;height:76px;background:#cfe9ee"></div>
<div class="a" style="left:852px;top:432px;width:1px;height:76px;background:#cfe9ee"></div>
<div class="a" style="left:1377px;top:432px;width:1px;height:76px;background:#cfe9ee"></div>
<div class="a" style="left:1118px;top:470px;width:1px;height:38px;background:#cfe9ee"></div>
<div class="a" style="left:1637px;top:470px;width:1px;height:38px;background:#cfe9ee"></div>
<div class="a" style="left:852px;top:470px;width:906px;height:1px;background:#cfe9ee"></div>
<div class="a" style="left:815px;top:310px;font-size:24px;line-height:24px;color:#444;"><span style="letter-spacing:0.25px">增 值 税 及 附 加 税 费 申 报 表 </span>（一般纳税人适用）</div>
<div class="a" style="left:0px;top:366px;font-size:18px;line-height:18px;color:#444;width:697px;text-align:right;letter-spacing:0.55px">纳税人识别号<span style="margin-left:1px">:</span></div>
<div class="a" style="left:0px;top:404px;font-size:18px;line-height:18px;color:#444;width:697px;text-align:right;letter-spacing:0.3px">纳税人名称(公章)<span style="margin-left:1px">:</span></div>
<div class="a" style="left:721px;top:404px;font-size:18px;line-height:18px;color:#444;">导入报错</div>
<div class="a" style="left:0px;top:404px;font-size:18px;line-height:18px;color:#444;width:1358px;text-align:right">税款所属时间<span style="margin-left:1px">:</span></div>
<div class="a" style="left:1384px;top:404px;font-size:19px;line-height:19px;color:#444;letter-spacing:0.14px">2023-05-01至2023-05-31</div>
<div class="a" style="left:262px;top:433px;width:452px;height:76px;line-height:76px;text-align:center;font-size:18px;color:#fff;">项 目</div>
<div class="a" style="left:714px;top:433px;width:138px;height:76px;line-height:76px;text-align:center;font-size:18px;color:#fff;">栏次</div>
<div class="a" style="left:852px;top:433px;width:525px;height:38px;line-height:38px;text-align:center;font-size:18px;color:#fff;">一般项目</div>
<div class="a" style="left:1377px;top:433px;width:549px;height:38px;line-height:38px;text-align:center;font-size:18px;color:#fff;">即征即退项目</div>
<div class="a" style="left:852px;top:471px;width:266px;height:38px;line-height:38px;text-align:center;font-size:18px;color:#fff;">本月数</div>
<div class="a" style="left:1118px;top:471px;width:259px;height:38px;line-height:38px;text-align:center;font-size:18px;color:#fff;">本年累计</div>
<div class="a" style="left:1377px;top:471px;width:260px;height:38px;line-height:38px;text-align:center;font-size:18px;color:#fff;">本月数</div>
<div class="a" style="left:1637px;top:471px;width:289px;height:38px;line-height:38px;text-align:center;font-size:18px;color:#fff;">本年累计</div>
<div class="a" style="left:276px;top:663px;width:20px;font-size:18px;line-height:24px;color:#444;white-space:normal">销<br>售<br>额</div>
<div class="a" style="left:318px;top:508px;height:38px;line-height:38px;font-size:18px;color:#444">(一)按适用税率计税销售额</div>
<div class="a" style="left:714px;top:508px;width:138px;height:38px;line-height:38px;text-align:center;font-size:20px;color:#444;"><span style="display:inline-block;transform:scaleX(0.88)">1</span></div>
<div class="a" style="left:852px;top:508px;width:258px;height:38px;line-height:38px;text-align:right;font-size:20px;color:#444"><span style="display:inline-block;transform:scaleX(0.88);transform-origin:100% 50%">0</span></div>
<div class="a" style="left:1118px;top:508px;width:251px;height:38px;line-height:38px;text-align:right;font-size:20px;color:#444"><span style="display:inline-block;transform:scaleX(0.88);transform-origin:100% 50%">0</span></div>
<div class="a" style="left:1377px;top:508px;width:252px;height:38px;line-height:38px;text-align:right;font-size:20px;color:#444"><span style="display:inline-block;transform:scaleX(0.88);transform-origin:100% 50%">0</span></div>
<div class="a" style="left:318px;top:546px;height:38px;line-height:38px;font-size:18px;color:#444">其中：应税货物销售额</div>
<div class="a" style="left:714px;top:546px;width:138px;height:38px;line-height:38px;text-align:center;font-size:20px;color:#444;"><span style="display:inline-block;transform:scaleX(0.88)">2</span></div>
<div class="a" style="left:852px;top:546px;width:258px;height:38px;line-height:38px;text-align:right;font-size:20px;color:#444"><span style="display:inline-block;transform:scaleX(0.88);transform-origin:100% 50%">0</span></div>
<div class="a" style="left:1118px;top:546px;width:251px;height:38px;line-height:38px;text-align:right;font-size:20px;color:#444"><span style="display:inline-block;transform:scaleX(0.88);transform-origin:100% 50%">0</span></div>
<div class="a" style="left:1377px;top:546px;width:252px;height:38px;line-height:38px;text-align:right;font-size:20px;color:#444"><span style="display:inline-block;transform:scaleX(0.88);transform-origin:100% 50%">0</span></div>
<div class="a" style="left:318px;top:584px;height:38px;line-height:38px;font-size:18px;color:#444">应税劳务销售额</div>
<div class="a" style="left:714px;top:584px;width:138px;height:38px;line-height:38px;text-align:center;font-size:20px;color:#444;"><span style="display:inline-block;transform:scaleX(0.88)">3</span></div>
<div class="a" style="left:852px;top:584px;width:258px;height:38px;line-height:38px;text-align:right;font-size:20px;color:#444"><span style="display:inline-block;transform:scaleX(0.88);transform-origin:100% 50%">0</span></div>
<div class="a" style="left:1118px;top:584px;width:251px;height:38px;line-height:38px;text-align:right;font-size:20px;color:#444"><span style="display:inline-block;transform:scaleX(0.88);transform-origin:100% 50%">0</span></div>
<div class="a" style="left:1377px;top:584px;width:252px;height:38px;line-height:38px;text-align:right;font-size:20px;color:#444"><span style="display:inline-block;transform:scaleX(0.88);transform-origin:100% 50%">0</span></div>
<div class="a" style="left:318px;top:622px;height:38px;line-height:38px;font-size:18px;color:#444">纳税检查调整的销售额</div>
<div class="a" style="left:714px;top:622px;width:138px;height:38px;line-height:38px;text-align:center;font-size:20px;color:#444;"><span style="display:inline-block;transform:scaleX(0.88)">4</span></div>
<div class="a" style="left:852px;top:622px;width:258px;height:38px;line-height:38px;text-align:right;font-size:20px;color:#444"><span style="display:inline-block;transform:scaleX(0.88);transform-origin:100% 50%">0</span></div>
<div class="a" style="left:1118px;top:622px;width:251px;height:38px;line-height:38px;text-align:right;font-size:20px;color:#444"><span style="display:inline-block;transform:scaleX(0.88);transform-origin:100% 50%">0</span></div>
<div class="a" style="left:318px;top:660px;height:38px;line-height:38px;font-size:18px;color:#444">(二)按简易办法计税销售额</div>
<div class="a" style="left:714px;top:660px;width:138px;height:38px;line-height:38px;text-align:center;font-size:20px;color:#444;"><span style="display:inline-block;transform:scaleX(0.88)">5</span></div>
<div class="a" style="left:852px;top:660px;width:258px;height:38px;line-height:38px;text-align:right;font-size:20px;color:#444"><span style="display:inline-block;transform:scaleX(0.88);transform-origin:100% 50%">0</span></div>
<div class="a" style="left:1118px;top:660px;width:251px;height:38px;line-height:38px;text-align:right;font-size:20px;color:#444"><span style="display:inline-block;transform:scaleX(0.88);transform-origin:100% 50%">0</span></div>
<div class="a" style="left:1377px;top:660px;width:252px;height:38px;line-height:38px;text-align:right;font-size:20px;color:#444"><span style="display:inline-block;transform:scaleX(0.88);transform-origin:100% 50%">0</span></div>
<div class="a" style="left:318px;top:698px;height:38px;line-height:38px;font-size:18px;color:#444">其中：纳税检查调整的销售额</div>
<div class="a" style="left:714px;top:698px;width:138px;height:38px;line-height:38px;text-align:center;font-size:20px;color:#444;"><span style="display:inline-block;transform:scaleX(0.88)">6</span></div>
<div class="a" style="left:1118px;top:698px;width:251px;height:38px;line-height:38px;text-align:right;font-size:20px;color:#444"><span style="display:inline-block;transform:scaleX(0.88);transform-origin:100% 50%">0</span></div>
<div class="a" style="left:318px;top:736px;height:38px;line-height:38px;font-size:18px;color:#444">(三)免、抵、退办法出口销售额</div>
<div class="a" style="left:714px;top:736px;width:138px;height:38px;line-height:38px;text-align:center;font-size:20px;color:#444;"><span style="display:inline-block;transform:scaleX(0.88)">7</span></div>
<div class="a" style="left:852px;top:736px;width:258px;height:38px;line-height:38px;text-align:right;font-size:20px;color:#444"><span style="display:inline-block;transform:scaleX(0.88);transform-origin:100% 50%">0</span></div>
<div class="a" style="left:1118px;top:736px;width:251px;height:38px;line-height:38px;text-align:right;font-size:20px;color:#444"><span style="display:inline-block;transform:scaleX(0.88);transform-origin:100% 50%">0</span></div>
<div class="a" style="left:1377px;top:736px;width:260px;height:38px;line-height:38px;text-align:center;font-size:18px;color:#444;">——</div>
<div class="a" style="left:1758px;top:256px;width:13px;height:530px;background:#fff"></div>
<div class="a" style="left:186px;top:771px;width:1585px;height:15px;background:#fff"></div>
<div class="a" style="left:1758px;top:256px;width:13px;height:115px;background:#b1b0ae;border-radius:6px 0 0 6px"></div>
<div class="a" style="left:186px;top:771px;width:1416px;height:15px;background:#b1b0ae;border-radius:7.5px"></div>
<div class="a" style="left:1770px;top:591px;width:4px;height:10px;background:#3fd0a9;border-radius:2px"></div>
<div class="a" style="left:186px;top:786px;width:1585px;height:60px;background:#f6fbfe"></div>
<div class="a" style="left:265px;top:808px;font-size:18px;line-height:18px;color:#333;">温馨提示：本表供参考，请认真核对数据后再上报!</div>
<div class="a" style="left:1502px;top:809px;font-size:18px;line-height:18px;color:#333;">单元格编辑过：示例</div>
<div class="a" style="left:1669px;top:802px;width:77px;height:32px;background:#fdf3e2;border:1px solid #d8d8d8"></div>
<div class="a" style="left:1230px;top:827px;width:75px;height:22px;background:#fff"></div>
<svg style="left:1234px;top:829px" width="70" height="20" viewBox="0 0 70 20">
<path d="M3.5 1V20" stroke="#b8b8b8" stroke-width="1.2" stroke-dasharray="1.5 4.5"/>
<path d="M14 6.5L30.5 2L37 20H17Z" fill="#fb4f14"/>
<path d="M31 8.5Q22 7.5 19.5 10Q18.5 13 24 13.5Q30 14 28 17Q26 19 19 18.5" fill="none" stroke="#fff" stroke-width="2.6"/>
<path d="M54 9H61M54 19.5H61" stroke="#000" stroke-width="2.6"/></svg>
</body></html>
